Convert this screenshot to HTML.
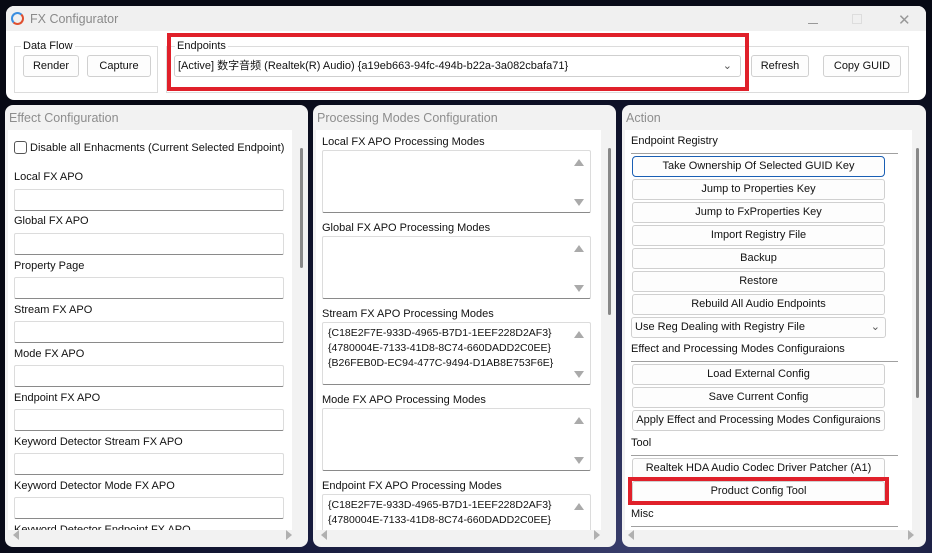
<!DOCTYPE html>
<html><head><meta charset="utf-8"><style>
*{box-sizing:border-box;margin:0;padding:0}
body{width:932px;height:553px;overflow:hidden;position:relative;background:radial-gradient(ellipse at 70% 100%,#3a3f6e 0%,#15193a 40%,#070914 75%);font-family:"Liberation Sans","Noto Sans CJK SC",sans-serif;font-size:11px;color:#111}
.a{position:absolute}
.win{background:#fff;border-radius:8px;overflow:hidden}
.ttl{background:#f0f0f0;color:#8a8a8a;font-size:12.5px}
.btn{position:absolute;background:#fdfdfd;border:1px solid #d0d0d0;border-radius:3px;text-align:center;font-size:11px;line-height:19px;color:#111}
.tb{position:absolute;background:#fff;border:1px solid #dcdcdc;border-bottom:1px solid #8a8a8a;border-radius:2px}
.lb{position:absolute;background:#fff;border:1px solid #dcdcdc;border-bottom:1px solid #8a8a8a;border-radius:2px;padding:3px 5px;line-height:15px;font-size:10.5px}
.up,.dn{position:absolute;right:6px;width:0;height:0;border-left:5px solid transparent;border-right:5px solid transparent}
.up{top:8px;border-bottom:7px solid #aaa}.dn{bottom:6px;border-top:7px solid #aaa}
.panel{position:absolute;top:105px;height:442px;background:#f2f2f2;border-radius:8px;overflow:hidden}
.ptitle{position:absolute;left:4px;top:6px;color:#8d8d8d;font-size:12.5px}
.inner{position:absolute;left:3px;top:25px;width:284px;height:400px;background:#fff;overflow:hidden}
.lbl{position:absolute;font-size:11px}
.vthumb{position:absolute;width:3px;background:#888;border-radius:2px}
.hl,.hr{position:absolute;top:425px;width:0;height:0;border-top:5px solid transparent;border-bottom:5px solid transparent}
.hl{border-right:6px solid #b0b0b0}.hr{border-left:6px solid #b0b0b0}
.sep{position:absolute;height:1px;background:#a0a0a0}
.red{position:absolute;border:4px solid #e0202a}
</style></head><body>

<div class="a win" style="left:6px;top:6px;width:920px;height:94px">
 <div class="a ttl" style="left:0;top:0;width:920px;height:25px"></div>
 <div class="a" style="left:5px;top:6px;width:13px;height:13px;border-radius:50%;border:2px solid #e05030;border-left-color:#3a8ee0;border-top-color:#3a8ee0"></div>
 <div class="a" style="left:24px;top:6px;color:#8a8a8a;font-size:12.5px">FX Configurator</div>
 <div class="a" style="left:802px;top:17px;width:10px;height:1px;background:#999"></div>
 <div class="a" style="left:846px;top:8px;width:10px;height:10px;border:1px solid #ddd"></div>
 <div class="a" style="left:892px;top:5px;color:#999;font-size:15px">✕</div>
 <div class="a" style="left:8px;top:40px;width:144px;height:47px;border:1px solid #dcdcdc"></div>
 <div class="a" style="left:15px;top:34px;background:#fff;padding:0 2px;font-size:11px">Data Flow</div>
 <div class="btn" style="left:17px;top:49px;width:56px;height:22px;line-height:20px">Render</div>
 <div class="btn" style="left:81px;top:49px;width:64px;height:22px;line-height:20px">Capture</div>
 <div class="a" style="left:160px;top:40px;width:743px;height:47px;border:1px solid #dcdcdc"></div>
 <div class="a" style="left:169px;top:34px;background:#fff;padding:0 2px;font-size:11px">Endpoints</div>
 <div class="a" style="left:168px;top:49px;width:567px;height:22px;border:1px solid #cfcfcf;border-radius:3px;background:#fff;padding-left:3px;line-height:20px;font-size:11px">[Active] 数字音频 (Realtek(R) Audio) {a19eb663-94fc-494b-b22a-3a082cbafa71}<span style="position:absolute;right:8px;top:0;color:#555">⌄</span></div>
 <div class="btn" style="left:745px;top:49px;width:58px;height:22px;line-height:20px">Refresh</div>
 <div class="btn" style="left:817px;top:49px;width:78px;height:22px;line-height:20px">Copy GUID</div>
</div>
<div class="red" style="left:167px;top:33px;width:582px;height:58px"></div>

<div class="panel" style="left:5px;width:303px">
 <div class="ptitle">Effect Configuration</div>
 <div class="inner">
  <div class="a" style="left:6px;top:11px;width:13px;height:13px;border:1px solid #555;border-radius:3px"></div>
  <div class="lbl" style="left:22px;top:12px">Disable all Enhacments (Current Selected Endpoint)</div>
  <div class="lbl" style="left:6px;top:41px">Local FX APO</div><div class="tb" style="left:6px;top:59px;width:270px;height:22px"></div>
  <div class="lbl" style="left:6px;top:85px">Global FX APO</div><div class="tb" style="left:6px;top:103px;width:270px;height:22px"></div>
  <div class="lbl" style="left:6px;top:130px">Property Page</div><div class="tb" style="left:6px;top:147px;width:270px;height:22px"></div>
  <div class="lbl" style="left:6px;top:174px">Stream FX APO</div><div class="tb" style="left:6px;top:191px;width:270px;height:22px"></div>
  <div class="lbl" style="left:6px;top:218px">Mode FX APO</div><div class="tb" style="left:6px;top:235px;width:270px;height:22px"></div>
  <div class="lbl" style="left:6px;top:262px">Endpoint FX APO</div><div class="tb" style="left:6px;top:279px;width:270px;height:22px"></div>
  <div class="lbl" style="left:6px;top:306px">Keyword Detector Stream FX APO</div><div class="tb" style="left:6px;top:323px;width:270px;height:22px"></div>
  <div class="lbl" style="left:6px;top:350px">Keyword Detector Mode FX APO</div><div class="tb" style="left:6px;top:367px;width:270px;height:22px"></div>
  <div class="lbl" style="left:6px;top:394px">Keyword Detector Endpoint FX APO</div>
 </div>
 <div class="vthumb" style="left:295px;top:43px;height:120px"></div>
 <div class="hl" style="left:8px"></div><div class="hr" style="left:281px"></div>
</div>

<div class="panel" style="left:313px;width:303px">
 <div class="ptitle">Processing Modes Configuration</div>
 <div class="inner" style="width:285px">
  <div class="lbl" style="left:6px;top:6px">Local FX APO Processing Modes</div>
  <div class="lb" style="left:6px;top:20px;width:269px;height:63px"><div class="up"></div><div class="dn"></div></div>
  <div class="lbl" style="left:6px;top:92px">Global FX APO Processing Modes</div>
  <div class="lb" style="left:6px;top:106px;width:269px;height:63px"><div class="up"></div><div class="dn"></div></div>
  <div class="lbl" style="left:6px;top:178px">Stream FX APO Processing Modes</div>
  <div class="lb" style="left:6px;top:192px;width:269px;height:63px">{C18E2F7E-933D-4965-B7D1-1EEF228D2AF3}<br>{4780004E-7133-41D8-8C74-660DADD2C0EE}<br>{B26FEB0D-EC94-477C-9494-D1AB8E753F6E}<div class="up"></div><div class="dn"></div></div>
  <div class="lbl" style="left:6px;top:264px">Mode FX APO Processing Modes</div>
  <div class="lb" style="left:6px;top:278px;width:269px;height:63px"><div class="up"></div><div class="dn"></div></div>
  <div class="lbl" style="left:6px;top:350px">Endpoint FX APO Processing Modes</div>
  <div class="lb" style="left:6px;top:364px;width:269px;height:63px">{C18E2F7E-933D-4965-B7D1-1EEF228D2AF3}<br>{4780004E-7133-41D8-8C74-660DADD2C0EE}<div class="up"></div></div>
 </div>
 <div class="vthumb" style="left:295px;top:43px;height:167px"></div>
 <div class="hl" style="left:8px"></div><div class="hr" style="left:281px"></div>
</div>

<div class="panel" style="left:622px;width:304px">
 <div class="ptitle">Action</div>
 <div class="inner" style="width:287px;height:400px">
  <div class="lbl" style="left:6px;top:5px">Endpoint Registry</div>
  <div class="sep" style="left:6px;top:23px;width:267px"></div>
  <div class="btn" style="left:7px;top:26px;width:253px;height:21px;border:1px solid #1a5fb4;border-radius:4px">Take Ownership Of Selected GUID Key</div>
  <div class="btn" style="left:7px;top:49px;width:253px;height:21px">Jump to Properties Key</div>
  <div class="btn" style="left:7px;top:72px;width:253px;height:21px">Jump to FxProperties Key</div>
  <div class="btn" style="left:7px;top:95px;width:253px;height:21px">Import Registry File</div>
  <div class="btn" style="left:7px;top:118px;width:253px;height:21px">Backup</div>
  <div class="btn" style="left:7px;top:141px;width:253px;height:21px">Restore</div>
  <div class="btn" style="left:7px;top:164px;width:253px;height:21px">Rebuild All Audio Endpoints</div>
  <div class="btn" style="left:6px;top:187px;width:255px;height:21px;text-align:left;padding-left:3px">Use Reg Dealing with Registry File<span style="position:absolute;right:5px;top:0;color:#555">⌄</span></div>
  <div class="lbl" style="left:6px;top:213px">Effect and Processing Modes Configuraions</div>
  <div class="sep" style="left:6px;top:231px;width:267px"></div>
  <div class="btn" style="left:7px;top:234px;width:253px;height:21px">Load External Config</div>
  <div class="btn" style="left:7px;top:257px;width:253px;height:21px">Save Current Config</div>
  <div class="btn" style="left:7px;top:280px;width:253px;height:21px">Apply Effect and Processing Modes Configuraions</div>
  <div class="lbl" style="left:6px;top:307px">Tool</div>
  <div class="sep" style="left:6px;top:325px;width:267px"></div>
  <div class="btn" style="left:7px;top:328px;width:253px;height:21px">Realtek HDA Audio Codec Driver Patcher (A1)</div>
  <div class="btn" style="left:7px;top:351px;width:253px;height:21px">Product Config Tool</div>
  <div class="lbl" style="left:6px;top:378px">Misc</div>
  <div class="sep" style="left:6px;top:396px;width:267px"></div>
 </div>
 <div class="vthumb" style="left:294px;top:43px;height:250px"></div>
 <div class="hl" style="left:6px"></div><div class="hr" style="left:286px"></div>
</div>
<div class="red" style="left:628px;top:477px;width:261px;height:28px"></div>

</body></html>
